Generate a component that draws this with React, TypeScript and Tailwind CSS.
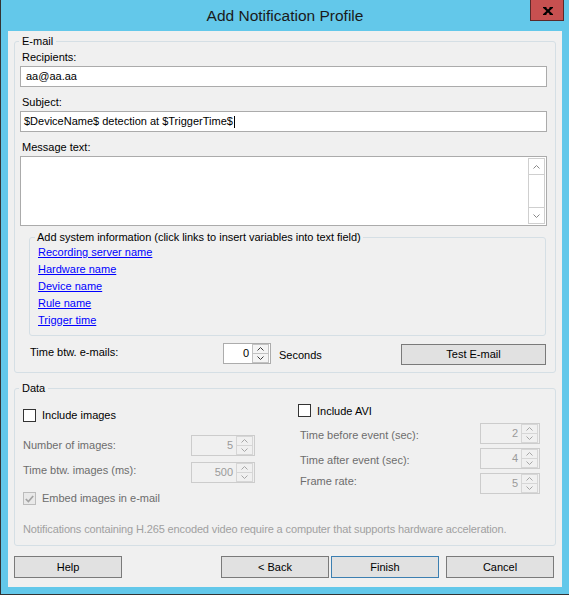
import React from "react";

function Chevron({ up, color }: { up: boolean; color: string }) {
  return (
    <svg width="7" height="4" viewBox="0 0 7 4" className="block">
      <path
        d={up ? "M0.5 3.5 L3.5 0.5 L6.5 3.5" : "M0.5 0.5 L3.5 3.5 L6.5 0.5"}
        fill="none"
        stroke={color}
        strokeWidth="1"
      />
    </svg>
  );
}

function Spinner({ value, w, disabled }: { value: string; w: string; disabled?: boolean }) {
  const box = disabled
    ? "border-[#cccccc] bg-[#f0f0f0] text-[#9a9a9a]"
    : "border-[#acacac] bg-white text-black";
  const btn = disabled ? "border-[#d6d6d6] bg-[#f0f0f0]" : "border-[#c2c2c2] bg-[#f4f4f4]";
  const chev = disabled ? "#a6a6a6" : "#3a3a3a";
  return (
    <div className={`flex h-[21px] shrink-0 border ${box} ${w}`}>
      <div className="flex-1 pr-[3px] text-right leading-[19px]">{value}</div>
      <div className="mr-px flex w-[17px] flex-col">
        <div className={`flex h-[10px] items-center justify-center border ${btn}`}>
          <Chevron up color={chev} />
        </div>
        <div className={`flex h-[9px] items-center justify-center border-x border-b ${btn}`}>
          <Chevron up={false} color={chev} />
        </div>
      </div>
    </div>
  );
}

function Check({ checked, disabled }: { checked?: boolean; disabled?: boolean }) {
  return (
    <div
      className={`flex h-[13px] w-[13px] shrink-0 items-center justify-center border ${
        disabled ? "border-[#bcbcbc] bg-[#e9e9e9]" : "border-[#333333] bg-white"
      }`}
    >
      {checked && (
        <svg width="9" height="8" viewBox="0 0 9 8" className="block">
          <path d="M0.8 4 L3.4 6.6 L8.2 1" fill="none" stroke="#a3a3a3" strokeWidth="1.7" />
        </svg>
      )}
    </div>
  );
}

function Button({ label, primary, w }: { label: string; primary?: boolean; w: string }) {
  return (
    <div
      className={`flex h-[22px] shrink-0 items-center justify-center border bg-[#e1e1e1] ${
        primary ? "border-[#3c7fb1]" : "border-[#7a7a7a]"
      } ${w}`}
    >
      {label}
    </div>
  );
}

const links = ["Recording server name", "Hardware name", "Device name", "Rule name", "Trigger time"];

export default function App() {
  return (
    <div className="flex h-[595px] w-[569px] flex-col border-b border-l border-[#333333] bg-[#63c8ea] font-['Liberation_Sans',Arial,sans-serif] text-[11px] text-black">
      {/* Title bar */}
      <div className="grid h-[31px] shrink-0 grid-cols-[1fr_auto_1fr]">
        <div />
        <div className="whitespace-nowrap text-[15.5px] leading-[31px] text-[#1a1a1a]">
          Add Notification Profile
        </div>
        <div className="flex items-start justify-end">
          <div className="mr-[5px] flex h-[21px] w-[34px] items-center justify-center border border-[#5a2a2a] border-t-0 bg-[#c75050] pl-px pt-px">
            <svg width="10" height="8" viewBox="0 0 10 8" className="block">
              <path d="M1.5 0.8 L8.5 7.2 M8.5 0.8 L1.5 7.2" stroke="#000" strokeWidth="2.2" fill="none" />
              <path d="M0 0.6 H3.4 M6.6 0.6 H10 M0 7.4 H3.4 M6.6 7.4 H10" stroke="#000" strokeWidth="1.2" fill="none" />
            </svg>
          </div>
        </div>
      </div>

      {/* Client */}
      <div className="ml-[7px] flex h-[556px] w-[554px] flex-col bg-[#f0f0f0]">
        {/* E-mail group */}
        <div className="ml-[6px] mt-[10px] flex w-[542px] flex-col rounded-[3px] border border-[#d5dfe5] pb-[7px]">
          <span className="-mt-[7px] ml-[4px] h-[13px] self-start bg-[#f0f0f0] px-[3px] leading-[13px]">E-mail</span>
          <div className="ml-[7px] mt-[3px] h-[13px] leading-[13px]">Recipients:</div>
          <div className="ml-[5px] mt-[2px] h-[21px] w-[527px] border border-[#ababab] bg-white pl-[5px] leading-[19px]">
            aa@aa.aa
          </div>
          <div className="ml-[7px] mt-[9px] h-[13px] leading-[13px]">Subject:</div>
          <div className="ml-[5px] mt-[2px] flex h-[21px] w-[527px] items-center border border-[#ababab] bg-white pl-[3px]">
            <span className="leading-[19px]">$DeviceName$ detection at $TriggerTime$</span>
            <span className="ml-px inline-block h-[12px] w-px bg-black" />
          </div>
          <div className="ml-[7px] mt-[9px] h-[13px] leading-[13px]">Message text:</div>
          <div className="ml-[5px] mt-[2px] flex h-[70px] w-[527px] justify-end border border-[#ababab] bg-white p-px">
            <div className="flex w-[17px] flex-col border border-[#cfcfcf]">
              <div className="flex h-[16px] items-center justify-center border-b border-[#cfcfcf]">
                <Chevron up color="#888888" />
              </div>
              <div className="flex-1" />
              <div className="flex h-[16px] items-center justify-center border-t border-[#cfcfcf]">
                <Chevron up={false} color="#888888" />
              </div>
            </div>
          </div>

          {/* Add system information */}
          <div className="ml-[14px] mt-[11px] flex w-[517px] flex-col rounded-[3px] border border-[#d5dfe5] pb-[6px]">
            <span className="-mt-[7px] ml-[5px] h-[13px] self-start whitespace-nowrap bg-[#f0f0f0] px-[2px] leading-[13px] tracking-[-0.03px]">
              Add system information (click links to insert variables into text field)
            </span>
            {links.map((l) => (
              <div key={l} className="ml-[8px] h-[17px] leading-[17px]">
                <span className="text-[#0000ff] underline">{l}</span>
              </div>
            ))}
          </div>

          {/* Time btw e-mails row */}
          <div className="mt-[7px] flex items-start">
            <div className="ml-[15px] mt-[3px] h-[13px] w-[193px] leading-[13px]">Time btw. e-mails:</div>
            <Spinner value="0" w="w-[48px]" />
            <div className="ml-[8px] mt-[6px] h-[13px] leading-[13px]">Seconds</div>
            <div className="ml-auto mr-[9px] mt-px flex h-[21px] w-[145px] items-center justify-center border border-[#7a7a7a] bg-[#e1e1e1]">
              Test E-mail
            </div>
          </div>
        </div>

        {/* Data group */}
        <div className="ml-[6px] mt-[15px] flex w-[542px] flex-col rounded-[3px] border border-[#d5dfe5] pb-[9px]">
          <span className="-mt-[7px] ml-[4px] h-[13px] self-start bg-[#f0f0f0] px-[3px] leading-[13px]">Data</span>
          <div className="flex">
            <div className="ml-[8px] flex w-[232px] flex-col">
              <div className="mt-[14px] flex items-start">
                <Check />
                <span className="ml-[6px] h-[13px] leading-[13px]">Include images</span>
              </div>
              <div className="mt-[13px] flex items-start">
                <span className="mt-[4px] h-[13px] w-[168px] leading-[13px] text-[#6d6d6d]">Number of images:</span>
                <Spinner value="5" w="w-[64px]" disabled />
              </div>
              <div className="mt-[6px] flex items-start">
                <span className="mt-[2px] h-[13px] w-[168px] leading-[13px] text-[#6d6d6d]">Time btw. images (ms):</span>
                <Spinner value="500" w="w-[64px]" disabled />
              </div>
              <div className="mt-[9px] flex items-start">
                <Check checked disabled />
                <span className="ml-[6px] h-[13px] leading-[13px] text-[#6d6d6d]">Embed images in e-mail</span>
              </div>
            </div>
            <div className="ml-[43px] flex w-[242px] flex-col">
              <div className="mt-[9px] flex items-start">
                <Check />
                <span className="ml-[6px] mt-px h-[13px] leading-[13px]">Include AVI</span>
              </div>
              <div className="mt-[5px] flex items-start">
                <span className="ml-[2px] mt-[6px] h-[13px] w-[180px] leading-[13px] text-[#6d6d6d]">Time before event (sec):</span>
                <Spinner value="2" w="w-[60px]" disabled />
              </div>
              <div className="mt-[4px] flex items-start">
                <span className="ml-[2px] mt-[6px] h-[13px] w-[180px] leading-[13px] text-[#6d6d6d]">Time after event (sec):</span>
                <Spinner value="4" w="w-[60px]" disabled />
              </div>
              <div className="mt-[4px] flex items-start">
                <span className="ml-[2px] mt-[2px] h-[13px] w-[180px] leading-[13px] text-[#6d6d6d]">Frame rate:</span>
                <Spinner value="5" w="w-[60px]" disabled />
              </div>
            </div>
          </div>
          <div className="ml-[8px] mt-[18px] h-[13px] whitespace-nowrap leading-[13px] tracking-[-0.13px] text-[#a0a0a0]">
            Notifications containing H.265 encoded video require a computer that supports hardware acceleration.
          </div>
        </div>

        {/* Bottom buttons */}
        <div className="mt-[10px] flex">
          <div className="ml-[6px]">
            <Button label="Help" w="w-[108px]" />
          </div>
          <div className="ml-[99px]">
            <Button label="< Back" w="w-[108px]" />
          </div>
          <div className="ml-[2px]">
            <Button label="Finish" primary w="w-[108px]" />
          </div>
          <div className="ml-[7px]">
            <Button label="Cancel" w="w-[108px]" />
          </div>
        </div>
      </div>
    </div>
  );
}
